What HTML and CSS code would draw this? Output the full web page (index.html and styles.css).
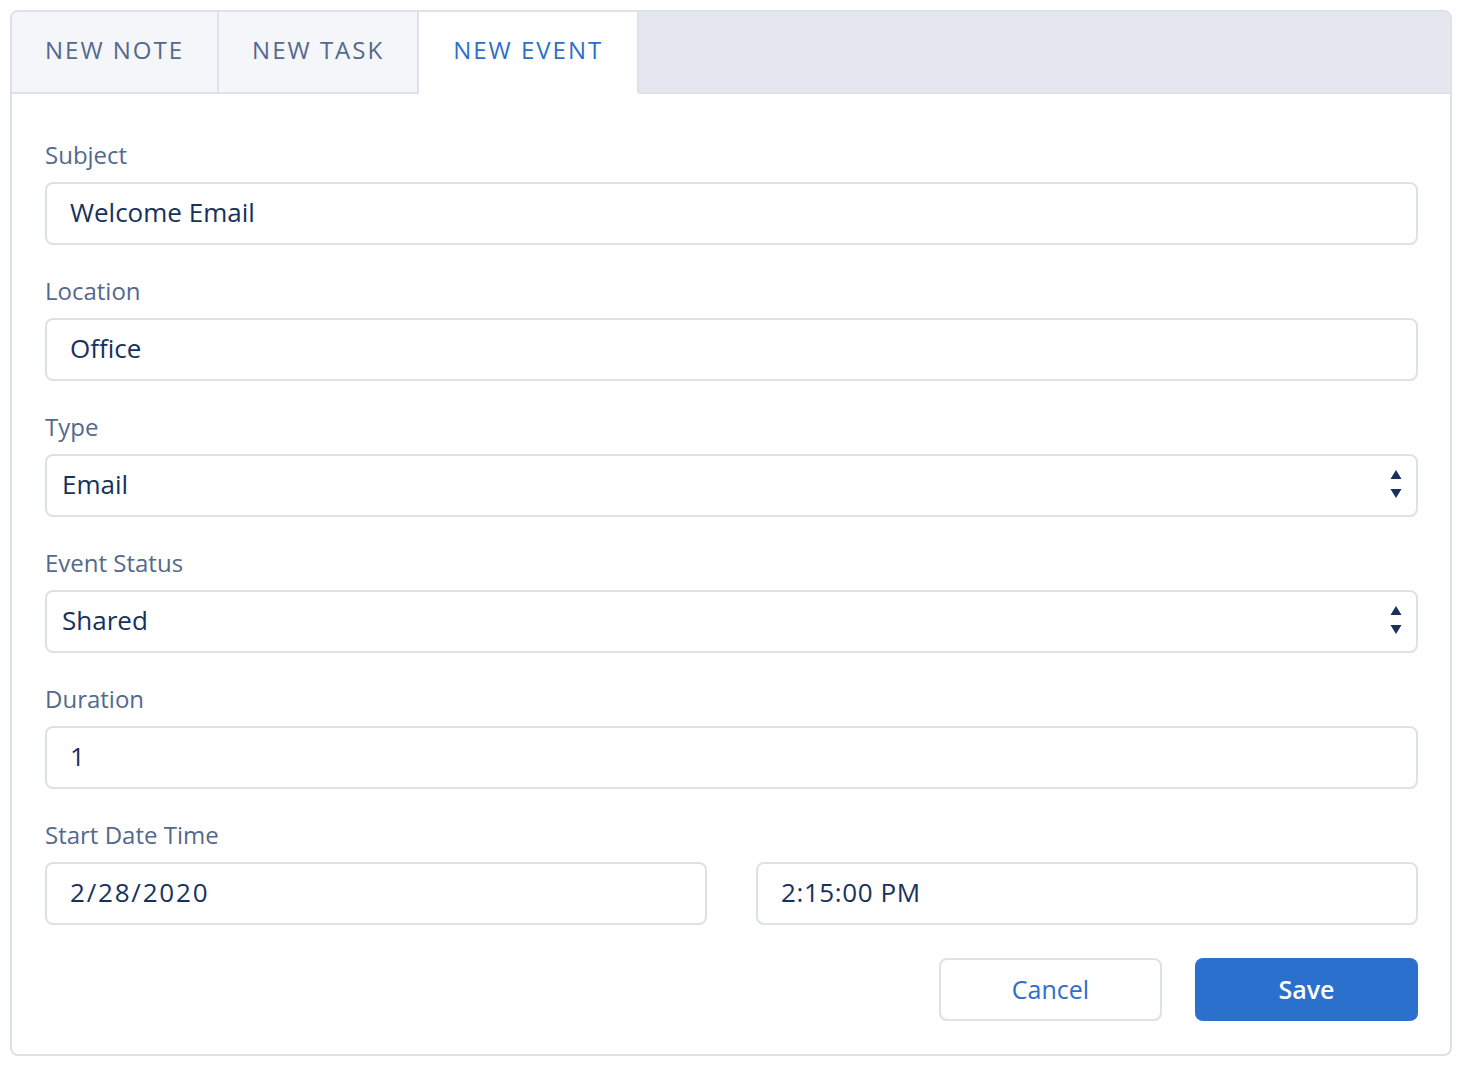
FILE: index.html
```html
<!DOCTYPE html>
<html lang="en">
<head>
    <meta charset="UTF-8">
    <title>New Event</title>
    <link rel="stylesheet" href="styles.css">
</head>
<body>
    <div class="card">
        <!-- Onglets -->
        <div class="tabs">
            <div class="tab">New Note</div>
            <div class="tab">New Task</div>
            <div class="tab active">New Event</div>
            <div class="tab-fill"></div>
        </div>

        <!-- Formulaire -->
        <form class="event-form">
            <div class="field">
                <label>Subject</label>
                <div class="input">Welcome Email</div>
            </div>
            <div class="field">
                <label>Location</label>
                <div class="input">Office</div>
            </div>
            <div class="field">
                <label>Type</label>
                <div class="input select">
                    <span>Email</span>
                    <svg class="arrows" width="12" height="32" viewBox="0 0 12 32"><path d="M6 2 L11.5 11 H0.5 Z M0.5 21 H11.5 L6 30 Z" fill="#16325c"/></svg>
                </div>
            </div>
            <div class="field">
                <label>Event Status</label>
                <div class="input select">
                    <span>Shared</span>
                    <svg class="arrows" width="12" height="32" viewBox="0 0 12 32"><path d="M6 2 L11.5 11 H0.5 Z M0.5 21 H11.5 L6 30 Z" fill="#16325c"/></svg>
                </div>
            </div>
            <div class="field">
                <label>Duration</label>
                <div class="input">1</div>
            </div>
            <div class="field">
                <label>Start Date Time</label>
                <div class="row">
                    <div class="input date">2/28/2020</div>
                    <div class="input time">2:15:00 PM</div>
                </div>
            </div>
            <div class="actions">
                <button type="button" class="btn btn-cancel">Cancel</button>
                <button type="button" class="btn btn-save">Save</button>
            </div>
        </form>
    </div>
</body>
</html>
```

FILE: styles.css
```css
/* Carte "New Event" */
body {
    margin: 0;
    background: white;
    font-family: "Open Sans", "Noto Sans", sans-serif;
}

.card {
    margin: 10px;
    width: 1442px;
    box-sizing: border-box;
    height: 1046px;
    border: 2px solid #dde1ea;
    border-radius: 8px;
    overflow: hidden;
}

.tabs {
    display: flex;
    height: 82px;
}

.tab {
    display: flex;
    align-items: center;
    padding: 0 33px 5px 33px;
    background: #f4f6f9;
    border-right: 2px solid #dde1ea;
    border-bottom: 2px solid #dde1ea;
    color: #54698d;
    font-size: 24px;
    letter-spacing: 2px;
    text-transform: uppercase;
}

.tab.active {
    background: white;
    color: #2b6fcd;
    border-bottom-color: white;
    padding: 0 34px 5px 34px;
}

.tab-fill {
    flex: 1;
    background: #e4e7ef;
    border-bottom: 2px solid #dde1ea;
}

.event-form {
    padding: 43px 32px 0 33px;
}

.field {
    margin-bottom: 28px;
}

.field label {
    display: block;
    height: 36px;
    line-height: 36px;
    margin-bottom: 9px;
    color: #54698d;
    font-size: 24px;
}

.input {
    display: flex;
    align-items: center;
    height: 63px;
    box-sizing: border-box;
    padding: 0 23px 3px 23px;
    border: 2px solid #dde1ea;
    border-radius: 8px;
    color: #16325c;
    font-size: 26px;
}

.input.select {
    justify-content: space-between;
    padding: 0 14px 3px 15px;
}

.input.date {
    letter-spacing: 1.8px;
}

.input.time {
    letter-spacing: 0.6px;
}

.row {
    display: flex;
    gap: 49px;
}

.row .input {
    flex: 1;
}

.actions {
    display: flex;
    justify-content: flex-end;
    gap: 33px;
    margin-top: 33px;
}

.btn {
    width: 223px;
    height: 63px;
    padding-bottom: 3px;
    border-radius: 8px;
    font-family: inherit;
    font-size: 25px;
    cursor: pointer;
}

.btn-cancel {
    background: white;
    border: 2px solid #dde1ea;
    color: #2b6fcd;
}

.btn-save {
    background: #2c70ce;
    border: none;
    color: white;
    font-weight: 600;
}
```
